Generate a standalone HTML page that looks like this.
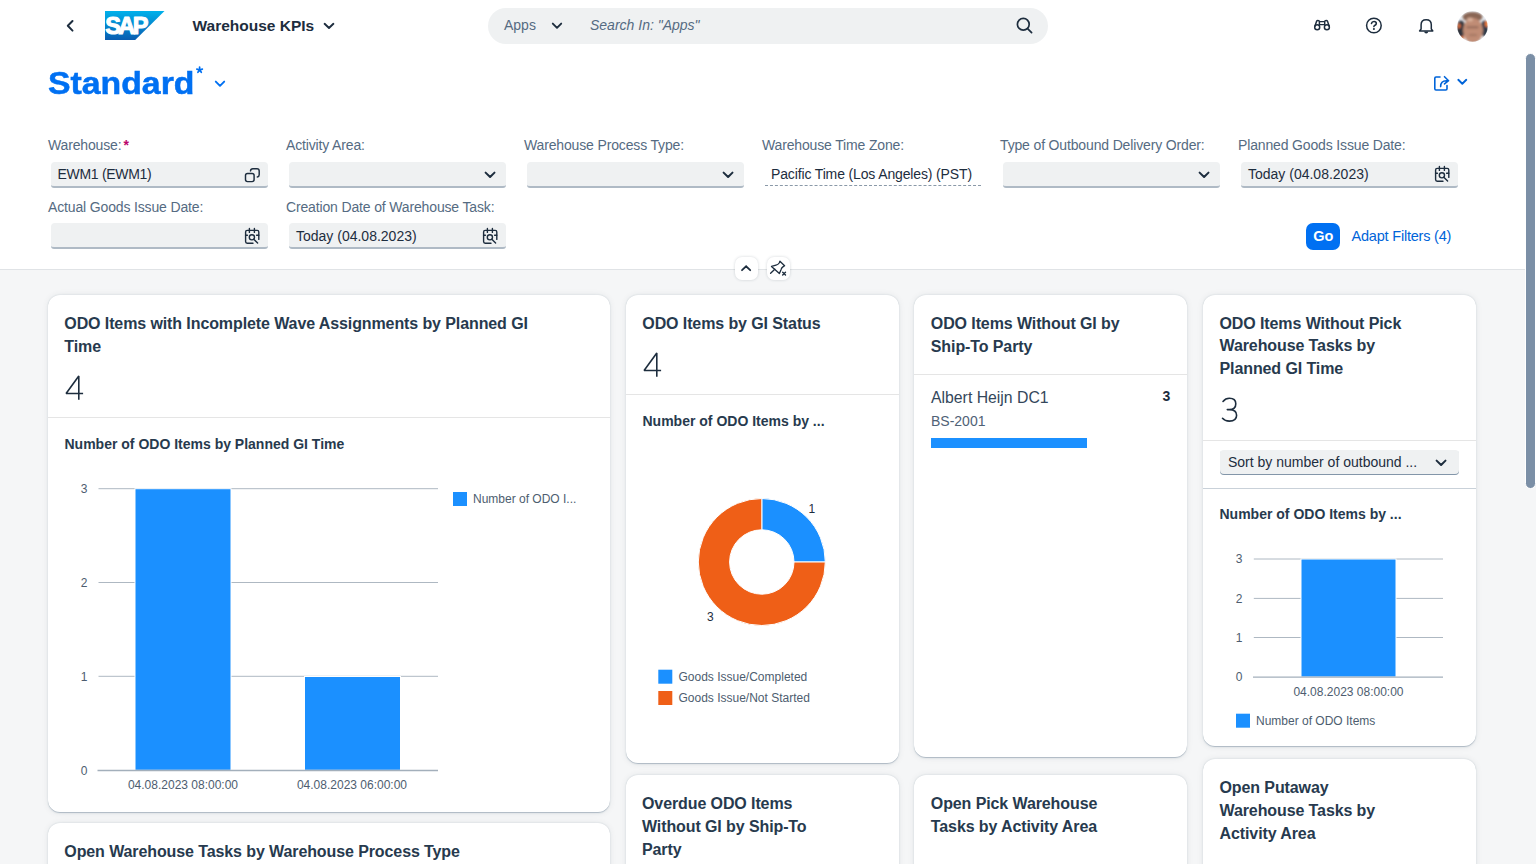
<!DOCTYPE html>
<html><head><meta charset="utf-8">
<style>
*{box-sizing:border-box;margin:0;padding:0}
html,body{width:1536px;height:864px;overflow:hidden;background:#f5f6f7;font-family:"Liberation Sans",sans-serif;color:#1d2d3e}
.a{position:absolute;white-space:nowrap;line-height:1}
#shell{position:absolute;left:0;top:0;width:1536px;height:52px;background:#fff}
#hdr{position:absolute;left:0;top:52px;width:1536px;height:217px;background:#fff;box-shadow:0 1px 0 #e0e3e6}
.lbl{font-size:14px;color:#556b82;letter-spacing:-0.15px}
.fld{position:absolute;height:26px;width:217px;background:#eff1f2;border-radius:4px 4px 3px 3px;border-bottom:2px solid #afbac5}
.ftx{font-size:14px;color:#1d2d3e}
.card{position:absolute;background:#fff;border-radius:12px;box-shadow:0 0 2px rgba(34,53,72,0.16),0 0 7px rgba(34,53,72,0.07),inset 0 -1px 0 #b3bdc7}
.ct{position:absolute;font-weight:bold;font-size:16px;line-height:22.7px;color:#273a4e;white-space:nowrap;letter-spacing:-0.1px}
.cht{font-weight:bold;font-size:14px;color:#273a4e}
.sep{position:absolute;height:1px;background:#e5e5e5}
.ax{font-size:12px;color:#4a5a6b}
#sb{position:absolute;left:1524.5px;top:52.5px;width:11px;height:436px;border-radius:6px;background:#7b8fa6;border:1px solid #fff}
</style></head><body>
<svg width="0" height="0" style="position:absolute"><defs>
<symbol id="cal" viewBox="0 0 24 24"><g fill="none" stroke="#1d2d3e" stroke-width="1.4" stroke-linecap="round"><path d="M13 19.2 H7.2 Q5.6 19.2 5.6 17.6 V8 Q5.6 6.4 7.2 6.4 H17.2 Q18.8 6.4 18.8 8 V15.4"/><path d="M5.6 11.25 H7.4 M16.6 11.25 H18.8 M9.4 4.4 V8.4 M14.4 4.4 V8.4"/><circle cx="11.9" cy="13.3" r="2.6"/><path d="M13.8 15.3 L17.6 19.1"/></g></symbol>
<symbol id="chev" viewBox="0 0 24 24"><path d="M7.6 10.6 L12.1 15 L16.5 10.6" fill="none" stroke="#1d2d3e" stroke-width="2" stroke-linecap="round" stroke-linejoin="round"/></symbol>
<symbol id="vh" viewBox="0 0 24 24"><g fill="none" stroke="#1d2d3e" stroke-width="1.45"><rect x="5.5" y="11.5" width="8.6" height="8.1" rx="2"/><path d="M10.5 8.9 Q10.7 6.7 12.8 6.7 H17 Q19.2 6.7 19.2 8.9 V12.8 Q19.2 14.8 17.3 15" stroke-linecap="round"/></g></symbol>
</defs></svg>
<!-- SHELL BAR -->
<div id="shell">
  <svg class="a" style="left:62px;top:16px" width="16" height="18" viewBox="0 0 16 18"><path d="M10.5 5 L5.8 9.8 L10.5 14.6" fill="none" stroke="#1d2d3e" stroke-width="2" stroke-linecap="round" stroke-linejoin="round"/></svg>
  <svg class="a" style="left:104.5px;top:11px" width="60" height="29" viewBox="0 0 60 29">
    <defs><linearGradient id="sapg" x1="0" y1="0" x2="0" y2="1"><stop offset="0" stop-color="#00b1eb"/><stop offset="1" stop-color="#0a5cb0"/></linearGradient></defs>
    <path d="M0 0 H59.5 L30.2 29 H0 Z" fill="url(#sapg)"/>
    <text x="0.2" y="23" font-family="Liberation Sans" font-weight="bold" font-size="23.5" fill="#fff" stroke="#fff" stroke-width="1.1" stroke-linejoin="round" letter-spacing="-2.5">SAP</text>
  </svg>
  <div class="a" style="left:192.5px;top:17.9px;font-size:15.5px;font-weight:bold;color:#1d2d3e">Warehouse KPIs</div>
  <svg class="a" style="left:322px;top:20px" width="14" height="12" viewBox="0 0 14 12"><path d="M2.6 3.8 L7 8 L11.4 3.8" fill="none" stroke="#1d2d3e" stroke-width="1.9" stroke-linecap="round" stroke-linejoin="round"/></svg>
  <!-- search -->
  <div class="a" style="left:488px;top:8px;width:560px;height:36px;border-radius:18px;background:#eff1f2"></div>
  <div class="a" style="left:504px;top:17.6px;font-size:14px;color:#556b82">Apps</div>
  <svg class="a" style="left:550px;top:20px" width="14" height="12" viewBox="0 0 14 12"><path d="M2.8 3.6 L7 7.8 L11.2 3.6" fill="none" stroke="#1d2d3e" stroke-width="1.9" stroke-linecap="round" stroke-linejoin="round"/></svg>
  <div class="a" style="left:590px;top:17.6px;font-size:14px;font-style:italic;color:#556b82">Search In: "Apps"</div>
  <svg class="a" style="left:1014px;top:15px" width="22" height="22" viewBox="0 0 22 22"><circle cx="9.3" cy="9.3" r="5.9" fill="none" stroke="#1d2d3e" stroke-width="1.7"/><path d="M13.6 13.6 L17.6 17.6" stroke="#1d2d3e" stroke-width="1.7" stroke-linecap="round"/></svg>
  <!-- right icons -->
  <svg class="a" style="left:1310px;top:14px" width="24" height="24" viewBox="0 0 24 24"><g fill="none" stroke="#1d2d3e" stroke-width="1.45" stroke-linejoin="round"><circle cx="7.2" cy="13.3" r="2.5"/><circle cx="16.9" cy="13.3" r="2.5"/><path d="M4.8 12.6 L6.6 7.3 Q6.9 6.4 7.9 6.4 Q9.4 6.4 9.4 7.6 V11.6 M19.3 12.6 L17.5 7.3 Q17.2 6.4 16.2 6.4 Q14.7 6.4 14.7 7.6 V11.6 M9.4 7.6 H14.7 M9.4 10.6 H14.7"/></g></svg>
  <svg class="a" style="left:1362px;top:14px" width="24" height="24" viewBox="0 0 24 24"><circle cx="11.9" cy="11.5" r="7.3" fill="none" stroke="#1d2d3e" stroke-width="1.5"/><path d="M9.5 9.4 Q9.9 7.5 12 7.5 Q14.3 7.5 14.3 9.5 Q14.3 10.6 13 11.3 Q11.9 11.9 11.9 12.6" fill="none" stroke="#1d2d3e" stroke-width="1.6" stroke-linecap="round"/><circle cx="11.9" cy="15" r="1.05" fill="#1d2d3e"/></svg>
  <svg class="a" style="left:1414px;top:14px" width="24" height="24" viewBox="0 0 24 24"><path d="M5.6 17 L7.1 15 V10.8 Q7.1 5.8 12.2 5.8 Q17.3 5.8 17.3 10.8 V15 L18.8 17 Z" fill="none" stroke="#1d2d3e" stroke-width="1.5" stroke-linejoin="round"/><path d="M10.2 17.4 A2 2 0 0 0 14.2 17.4 Z" fill="#1d2d3e"/></svg>
  <svg class="a" style="left:1456.5px;top:11px" width="31" height="31" viewBox="0 0 31 31"><defs><clipPath id="avc"><circle cx="15.5" cy="15.5" r="15.2"/></clipPath><filter id="avb"><feGaussianBlur stdDeviation="0.9"/></filter></defs>
<g clip-path="url(#avc)"><rect width="31" height="31" fill="#e9eef3"/><g filter="url(#avb)">
<ellipse cx="15.5" cy="6" rx="10" ry="5" fill="#8a6655"/>
<ellipse cx="4" cy="18" rx="4.6" ry="8.5" fill="#30343c"/><ellipse cx="2.2" cy="15" rx="1.6" ry="2.4" fill="#e0703a"/><ellipse cx="5.5" cy="26.5" rx="2" ry="1.6" fill="#d8703a"/>
<ellipse cx="27.5" cy="17.5" rx="4" ry="8" fill="#2f3a48"/><ellipse cx="29.5" cy="13" rx="1.8" ry="3" fill="#ec7a3a"/>
<ellipse cx="16" cy="19.5" rx="10" ry="12.5" fill="#c08c74"/>
<ellipse cx="13" cy="8.5" rx="3" ry="2" fill="#d8ae98"/>
<rect x="9.5" y="15" width="12" height="2.6" rx="1.3" fill="#9c705e"/>
<ellipse cx="16" cy="24" rx="4.5" ry="1.3" fill="#a87a66"/>
</g></g></svg>
</div>

<!-- HEADER -->
<div id="hdr"></div>
<div class="a" style="left:48.3px;top:67.6px;font-size:31px;font-weight:bold;color:#0070f2;-webkit-text-stroke:0.5px #0070f2;transform:scaleX(1.09);transform-origin:0 0">Standard</div>
<svg class="a" style="left:194px;top:64px" width="12" height="12" viewBox="0 0 12 12"><g stroke="#0070f2" stroke-width="1.7" stroke-linecap="round"><path d="M5.6 6.0 L5.60 3.10 M5.6 6.0 L8.36 5.10 M5.6 6.0 L7.30 8.35 M5.6 6.0 L3.90 8.35 M5.6 6.0 L2.84 5.10"/></g></svg>
<svg class="a" style="left:213px;top:77.5px" width="14" height="12" viewBox="0 0 14 12"><path d="M2.8 3.6 L7 7.8 L11.2 3.6" fill="none" stroke="#0070f2" stroke-width="1.9" stroke-linecap="round" stroke-linejoin="round"/></svg>
<svg class="a" style="left:1432px;top:73px" width="18" height="19" viewBox="0 0 18 19"><g fill="none" stroke="#0064d9" stroke-width="1.6" stroke-linecap="round" stroke-linejoin="round"><path d="M8 4 H4 Q2.8 4 2.8 5.2 V15.8 Q2.8 17 4 17 H13.8 Q15 17 15 15.8 V12.5"/><path d="M8.65 13.6 Q8.65 7.8 14.3 7.8 H16 M12.5 3.7 L16.6 7.7 L12.5 10.9"/></g></svg>
<svg class="a" style="left:1455px;top:76px" width="14" height="12" viewBox="0 0 14 12"><path d="M3.3 3.8 L7.3 7.7 L11.3 3.8" fill="none" stroke="#0064d9" stroke-width="1.9" stroke-linecap="round" stroke-linejoin="round"/></svg>

<!-- filter labels row 1 -->
<div class="a lbl" style="left:48px;top:137.6px">Warehouse:<span style="color:#ba066c;font-weight:bold;margin-left:2px">*</span></div>
<div class="a lbl" style="left:286px;top:137.6px">Activity Area:</div>
<div class="a lbl" style="left:524px;top:137.6px">Warehouse Process Type:</div>
<div class="a lbl" style="left:762px;top:137.6px">Warehouse Time Zone:</div>
<div class="a lbl" style="left:1000px;top:137.6px">Type of Outbound Delivery Order:</div>
<div class="a lbl" style="left:1238px;top:137.6px">Planned Goods Issue Date:</div>
<!-- row 1 fields -->
<div class="fld" style="left:50.5px;top:161.5px"></div>
<div class="a ftx" style="left:57.5px;top:166.8px;letter-spacing:-0.3px">EWM1 (EWM1)</div>
<svg class="a" style="left:240px;top:162px" width="24" height="24"><use href="#vh"/></svg>
<div class="fld" style="left:288.5px;top:161.5px"></div>
<svg class="a" style="left:478px;top:162px" width="24" height="24"><use href="#chev"/></svg>
<div class="fld" style="left:526.5px;top:161.5px"></div>
<svg class="a" style="left:716px;top:162px" width="24" height="24"><use href="#chev"/></svg>
<div class="a ftx" style="left:771px;top:166.8px;letter-spacing:-0.14px">Pacific Time (Los Angeles) (PST)</div>
<div class="a" style="left:765px;top:185px;width:216px;height:1px;border-top:1px dashed #8a99a8"></div>
<div class="fld" style="left:1002.5px;top:161.5px"></div>
<svg class="a" style="left:1192px;top:162px" width="24" height="24"><use href="#chev"/></svg>
<div class="fld" style="left:1240.5px;top:161.5px"></div>
<div class="a ftx" style="left:1248px;top:166.8px">Today (04.08.2023)</div>
<svg class="a" style="left:1430px;top:162.4px" width="24" height="24"><use href="#cal"/></svg>
<!-- row 2 -->
<div class="a lbl" style="left:48px;top:199.7px">Actual Goods Issue Date:</div>
<div class="a lbl" style="left:286px;top:199.7px">Creation Date of Warehouse Task:</div>
<div class="fld" style="left:50.5px;top:223.3px"></div>
<svg class="a" style="left:240px;top:224px" width="24" height="24"><use href="#cal"/></svg>
<div class="fld" style="left:288.5px;top:223.3px"></div>
<div class="a ftx" style="left:296px;top:228.8px">Today (04.08.2023)</div>
<svg class="a" style="left:478px;top:224px" width="24" height="24"><use href="#cal"/></svg>
<!-- Go / Adapt -->
<div class="a" style="left:1306px;top:223px;width:34px;height:26.7px;border-radius:7px;background:#0070f2"></div>
<div class="a" style="left:1313.3px;top:228.6px;font-size:14.5px;font-weight:bold;color:#fff;letter-spacing:-0.2px">Go</div>
<div class="a" style="left:1351.5px;top:228.7px;font-size:14.5px;color:#0064d9;letter-spacing:-0.2px">Adapt Filters (4)</div>
<!-- collapse/pin -->
<div class="a" style="left:735px;top:257px;width:23px;height:23px;border-radius:7px;background:#fff;box-shadow:0 0 3px rgba(34,53,72,0.2)"></div>
<svg class="a" style="left:735px;top:257px" width="23" height="23" viewBox="0 0 23 23"><path d="M7 13.2 L11.1 9.3 L15.2 13.2" fill="none" stroke="#1d2d3e" stroke-width="1.8" stroke-linecap="round" stroke-linejoin="miter"/></svg>
<div class="a" style="left:767px;top:257px;width:23px;height:23px;border-radius:7px;background:#fff;box-shadow:0 0 3px rgba(34,53,72,0.2)"></div>
<svg class="a" style="left:767px;top:257px" width="23" height="23" viewBox="0 0 23 23"><g fill="none" stroke="#1d2d3e" stroke-width="1.3" stroke-linejoin="round" stroke-linecap="round"><path d="M12.9 4.2 L17.6 8.8 L15.9 9.9 Q14.5 10.8 14.1 12.4 L12.4 16.6 L4.5 9.4 L9 8.1 Q11.1 7.6 12.2 6 Z"/><path d="M7.8 12.2 L3.6 16.3"/><path d="M15.7 15.3 L18.5 18.1 M18.5 15.3 L15.7 18.1" stroke-width="1.4"/></g></svg>


<!-- CARDS -->
<div class="card" style="left:48px;top:294.5px;width:562px;height:518.5px"></div>
<div class="ct" style="left:64.3px;top:313.3px">ODO Items with Incomplete Wave Assignments by Planned GI<br>Time</div>
<svg class="a" style="left:60px;top:370px" width="30" height="34" viewBox="0 0 30 34"><path d="M18.8 29.8 V6 L6.1 23.5 H23.1" fill="none" stroke="#1d2d3e" stroke-width="1.6" stroke-linejoin="bevel"/></svg>
<div class="sep" style="left:48px;top:417px;width:562px"></div>
<div class="a cht" style="left:64.5px;top:437px">Number of ODO Items by Planned GI Time</div>
<!-- bar chart 1 -->
<svg class="a" style="left:48px;top:470px" width="562" height="330" viewBox="0 0 562 330">
  <g stroke="#aeb8c2" stroke-width="1">
    <line x1="50.5" y1="18.7" x2="390" y2="18.7"/>
    <line x1="50.5" y1="112.5" x2="390" y2="112.5"/>
    <line x1="50.5" y1="206.3" x2="390" y2="206.3"/>
  </g>
    <rect x="87" y="18.7" width="96" height="281.6" fill="#1b90ff" stroke="#fff" stroke-width="1"/>
  <rect x="256.5" y="206.5" width="96" height="93.8" fill="#1b90ff" stroke="#fff" stroke-width="1"/>
  <line x1="49.5" y1="300.5" x2="390" y2="300.5" stroke="#a3afbb" stroke-width="1.3"/>
  <g font-family="Liberation Sans" font-size="12" fill="#4d5d6f" text-anchor="end">
    <text x="39.5" y="23">3</text><text x="39.5" y="117">2</text><text x="39.5" y="211">1</text><text x="39.5" y="304.5">0</text>
  </g>
  <g font-family="Liberation Sans" font-size="12" fill="#4d5d6f" text-anchor="middle">
    <text x="135" y="318.6">04.08.2023 08:00:00</text><text x="304" y="318.6">04.08.2023 06:00:00</text>
  </g>
  <rect x="405" y="22" width="14" height="14" fill="#1b90ff"/>
  <text x="425" y="33.1" font-family="Liberation Sans" font-size="12" fill="#4d5d6f">Number of ODO I...</text>
</svg>

<div class="card" style="left:626px;top:294.5px;width:272.5px;height:469.5px"></div>
<div class="ct" style="left:642.3px;top:313.0px">ODO Items by GI Status</div>
<svg class="a" style="left:638.1px;top:346.8px" width="30" height="34" viewBox="0 0 30 34"><path d="M18.8 29.8 V6 L6.1 23.5 H23.1" fill="none" stroke="#1d2d3e" stroke-width="1.6" stroke-linejoin="bevel"/></svg>
<div class="sep" style="left:626px;top:393.6px;width:272.5px"></div>
<div class="a cht" style="left:642.5px;top:414px">Number of ODO Items by ...</div>
<svg class="a" style="left:626px;top:470px" width="272" height="250" viewBox="0 0 272 250">
  <g transform="translate(135.8,92)">
    <path d="M0 -63.5 A63.5 63.5 0 0 1 63.5 0 L32.2 0 A32.2 32.2 0 0 0 0 -32.2 Z" fill="#1b90ff" stroke="#fff" stroke-width="1"/>
    <path d="M63.5 0 A63.5 63.5 0 1 1 0 -63.5 L0 -32.2 A32.2 32.2 0 1 0 32.2 0 Z" fill="#ef5f17" stroke="#fff" stroke-width="1"/>
  </g>
  <g font-family="Liberation Sans" font-size="12" fill="#1d2d3e">
    <text x="182.5" y="43.3">1</text><text x="81" y="151">3</text>
  </g>
  <rect x="32.3" y="199.7" width="14" height="14" fill="#1b90ff"/>
  <rect x="32.3" y="221" width="14" height="14" fill="#ef5f17"/>
  <g font-family="Liberation Sans" font-size="12" fill="#4d5d6f">
    <text x="52.5" y="210.8">Goods Issue/Completed</text><text x="52.5" y="231.5">Goods Issue/Not Started</text>
  </g>
</svg>

<div class="card" style="left:914px;top:294.5px;width:273px;height:463px"></div>
<div class="ct" style="left:930.8px;top:313.2px">ODO Items Without GI by<br>Ship-To Party</div>
<div class="sep" style="left:914px;top:374px;width:273px"></div>
<div class="a" style="left:931px;top:390.3px;font-size:15.8px;color:#34475b">Albert Heijn DC1</div>
<div class="a" style="left:931px;top:413.6px;font-size:14px;color:#4f6276">BS-2001</div>
<div class="a" style="left:1162.5px;top:389.2px;font-size:14px;font-weight:bold;color:#1d2d3e">3</div>
<div class="a" style="left:931px;top:438px;width:155.5px;height:9.5px;background:#1b90ff"></div>

<div class="card" style="left:1203px;top:294.5px;width:273px;height:452.5px"></div>
<div class="ct" style="left:1219.5px;top:312.7px">ODO Items Without Pick<br>Warehouse Tasks by<br>Planned GI Time</div>
<svg class="a" style="left:1214px;top:392px" width="30" height="36" viewBox="0 0 30 36"><path d="M9 9.4 Q11.5 6.25 15.4 6.25 Q21.8 6.25 21.8 11.8 Q21.8 17.5 15.5 17.6 H13.3 M15.5 17.6 Q22.6 17.6 22.6 23.3 Q22.6 29.1 15.4 29.1 Q10.8 29.1 8.5 26.3" fill="none" stroke="#1d2d3e" stroke-width="1.6" stroke-linecap="round"/></svg>
<div class="sep" style="left:1203px;top:440px;width:273px"></div>
<div class="a" style="left:1220px;top:449.7px;width:238.5px;height:25px;background:#eff1f2;border-radius:4px;box-shadow:inset 0 -1px 0 #8396a9"></div>
<div class="a ftx" style="left:1228px;top:454.6px">Sort by number of outbound ...</div>
<svg class="a" style="left:1429px;top:450px" width="24" height="24"><use href="#chev"/></svg>
<div class="sep" style="left:1203px;top:488px;width:273px;background:#c9d1d9"></div>
<div class="a cht" style="left:1219.5px;top:507.3px">Number of ODO Items by ...</div>
<svg class="a" style="left:1203px;top:540px" width="273" height="200" viewBox="0 0 273 200">
  <g stroke="#aeb8c2" stroke-width="1">
    <line x1="50.8" y1="19" x2="240" y2="19"/>
    <line x1="50.8" y1="58.4" x2="240" y2="58.4"/>
    <line x1="50.8" y1="97.5" x2="240" y2="97.5"/>
  </g>
    <rect x="98" y="19" width="95" height="118" fill="#1b90ff" stroke="#fff" stroke-width="1"/>
  <line x1="50" y1="137.2" x2="240" y2="137.2" stroke="#a3afbb" stroke-width="1.3"/>
  <g font-family="Liberation Sans" font-size="12" fill="#4d5d6f" text-anchor="end">
    <text x="39.5" y="23.3">3</text><text x="39.5" y="62.7">2</text><text x="39.5" y="101.8">1</text><text x="39.5" y="141.3">0</text>
  </g>
  <text x="145.5" y="155.5" font-family="Liberation Sans" font-size="12" fill="#4d5d6f" text-anchor="middle">04.08.2023 08:00:00</text>
  <rect x="33" y="173.7" width="14" height="14" fill="#1b90ff"/>
  <text x="53" y="184.5" font-family="Liberation Sans" font-size="12" fill="#4d5d6f">Number of ODO Items</text>
</svg>

<!-- second row cards -->
<div class="card" style="left:48px;top:822.8px;width:562px;height:200px"></div>
<div class="ct" style="left:64.3px;top:841.1px">Open Warehouse Tasks by Warehouse Process Type</div>
<div class="card" style="left:626px;top:775.4px;width:272.5px;height:200px"></div>
<div class="ct" style="left:642px;top:793.4px">Overdue ODO Items<br>Without GI by Ship-To<br>Party</div>
<div class="card" style="left:914px;top:774.6px;width:273px;height:200px"></div>
<div class="ct" style="left:930.8px;top:793.3px">Open Pick Warehouse<br>Tasks by Activity Area</div>
<div class="card" style="left:1203px;top:758.9px;width:273px;height:200px"></div>
<div class="ct" style="left:1219.5px;top:777.2px">Open Putaway<br>Warehouse Tasks by<br>Activity Area</div>

<div id="sb"></div>
</body></html>
